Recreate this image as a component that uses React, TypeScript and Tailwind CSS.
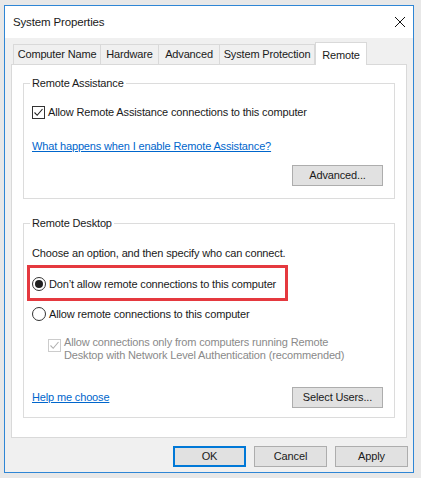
import React from 'react';

const font = { fontFamily: '"Liberation Sans", Arial, sans-serif' };

const Tab = ({ label, w, active = false, last = false }: { label: string; w: string; active?: boolean; last?: boolean }) =>
  active ? (
    <div className={`relative z-10 -mb-px flex h-[23px] items-start justify-center whitespace-nowrap border border-b-0 border-[#d9d9d9] bg-white pt-[4px] ${w}`}>
      {label}
    </div>
  ) : (
    <div
      className={`flex h-[20px] items-center justify-center whitespace-nowrap border border-b-0 border-[#d9d9d9] bg-[#f0f0f0] ${w} ${
        last ? '' : 'border-r-0'
      }`}
    >
      {label}
    </div>
  );

const Button = ({ label, w, primary = false }: { label: string; w: string; primary?: boolean }) => (
  <div
    className={`flex h-[21px] items-center justify-center bg-[#e1e1e1] ${w} ${
      primary ? 'border-2 border-[#0078d7]' : 'border border-[#adadad]'
    }`}
  >
    {label}
  </div>
);

const CheckBox = ({ disabled = false }: { disabled?: boolean }) => (
  <div
    className={`flex h-[13px] w-[13px] shrink-0 items-center justify-center border bg-white ${
      disabled ? 'border-[#cccccc]' : 'border-[#333333]'
    }`}
  >
    <svg width="11" height="11" viewBox="0 0 11 11">
      <path d="M1.5 5.5 L4.2 8.3 L9.5 2" fill="none" stroke={disabled ? '#b0b0b0' : '#222'} strokeWidth="1.1" />
    </svg>
  </div>
);

const Radio = ({ checked = false }: { checked?: boolean }) => (
  <div className="flex h-[14px] w-[14px] shrink-0 items-center justify-center rounded-full border border-[#333333] bg-white">
    {checked && <div className="h-[8px] w-[8px] rounded-full bg-[#1f1f1f]" />}
  </div>
);

export default function App() {
  return (
    <div
      className="h-[478px] w-[421px] bg-[#e8e8e8] pl-[4px] pt-[5px] text-[11px] tracking-[-0.15px] text-[#1a1a1a]"
      style={font}
    >
      <div className="flex h-[468px] w-[410px] flex-col border border-[#2f86d5] bg-[#f0f0f0]">
        {/* title bar */}
        <div className="flex h-[32px] items-center justify-between bg-white pl-[8px] pr-[7px]">
          <span className="pt-px text-[11.5px]">System Properties</span>
          <svg width="12" height="12" viewBox="0 0 12 12">
            <path d="M1 1 L11 11 M11 1 L1 11" stroke="#111" strokeWidth="1" />
          </svg>
        </div>

        {/* tabs */}
        <div className="ml-[8px] mt-[5px] flex h-[21px] items-end">
          <Tab label="Computer Name" w="w-[87px]" />
          <Tab label="Hardware" w="w-[58px]" />
          <Tab label="Advanced" w="w-[61px]" />
          <Tab label="System Protection" w="w-[96px]" last />
          <Tab label="Remote" w="w-[52px]" active />
        </div>

        {/* panel */}
        <div className="ml-[6px] h-[374px] w-[396px] border border-[#d9d9d9] bg-white px-[11px] pt-[18px]">
          {/* Remote Assistance */}
          <div className="relative h-[116px] border border-[#dcdcdc] px-[8px] pt-[20px]">
            <span className="absolute -top-[8px] left-[6px] bg-white px-[2px] leading-[15px]">Remote Assistance</span>
            <div className="flex h-[16px] items-center gap-[3px]">
              <CheckBox />
              <span>Allow Remote Assistance connections to this computer</span>
            </div>
            <div className="mt-[18px] flex h-[16px] items-center">
              <span className="text-[#0066cc] underline">What happens when I enable Remote Assistance?</span>
            </div>
            <div className="mt-[11px] flex justify-end pr-[3px]">
              <Button label="Advanced..." w="w-[91px]" />
            </div>
          </div>

          {/* Remote Desktop */}
          <div className="relative mt-[24px] h-[195px] border border-[#dcdcdc] px-[8px] pt-[21px]">
            <span className="absolute -top-[8px] left-[6px] bg-white px-[2px] leading-[15px]">Remote Desktop</span>
            <div className="flex h-[16px] items-center">Choose an option, and then specify who can connect.</div>
            <div className="mt-[15px] flex h-[16px] items-center gap-[3px]">
              <Radio checked />
              <span>Don’t allow remote connections to this computer</span>
            </div>
            <div className="mt-[14px] flex h-[16px] items-center gap-[3px]">
              <Radio />
              <span>Allow remote connections to this computer</span>
            </div>
            <div className="mt-[14px] flex gap-[3px] pl-[16px] leading-[13px] text-[#8a8a8a]">
              <div className="pt-[3px]">
                <CheckBox disabled />
              </div>
              <span>
                Allow connections only from computers running Remote
                <br />
                Desktop with Network Level Authentication (recommended)
              </span>
            </div>
            <div className="mt-[25px] flex h-[21px] items-center justify-between pr-[3px]">
              <span className="text-[#0066cc] underline">Help me choose</span>
              <Button label="Select Users..." w="w-[91px]" />
            </div>

            {/* highlight */}
            <div className="absolute left-[3px] top-[41px] h-[36px] w-[261px] border-[3px] border-[#e5393f]" />
          </div>
        </div>

        {/* dialog buttons */}
        <div className="mt-[8px] flex justify-end gap-[8px] pr-[5px]">
          <Button label="OK" w="w-[73px]" primary />
          <Button label="Cancel" w="w-[73px]" />
          <Button label="Apply" w="w-[73px]" />
        </div>
      </div>
    </div>
  );
}
